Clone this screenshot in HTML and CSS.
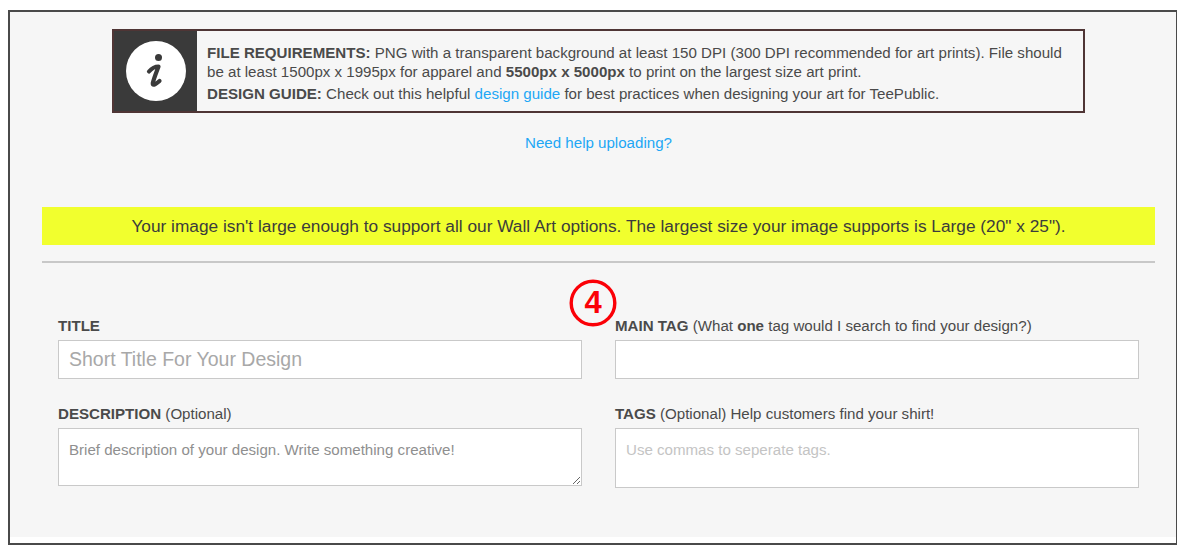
FILE: index.html
```html
<!DOCTYPE html>
<html lang="en">
<head>
    <meta charset="UTF-8">
    <title>Upload design</title>
    <link rel="stylesheet" href="styles.css">
</head>
<body>
    <div class="frame">
        <div class="panel">
            <section class="info">
                <div class="info__icon">
                    <svg width="60" height="60" viewBox="0 0 60 60" aria-hidden="true">
                        <circle cx="30" cy="30" r="30" fill="#ffffff"/>
                        <circle cx="32.500" cy="16.500" r="3.500" fill="#3a3a3a"/>
                        <path d="M23 30.500 C26 27 29 25.500 32.500 25.500 C30.500 31 28 37 26.800 42 C26.300 44.500 28.500 44.500 33.500 40" fill="none" stroke="#3a3a3a" stroke-width="4.200" stroke-linecap="round" stroke-linejoin="round"/>
                    </svg>
                </div>
                <div class="info__text">
                    <p class="info__line"><b>FILE REQUIREMENTS:</b> PNG with a transparent background at least 150 DPI (300 DPI recommended for art prints). File should be at least 1500px x 1995px for apparel and <b>5500px x 5000px</b> to print on the largest size art print.</p>
                    <p class="info__line info__line_guide"><b>DESIGN GUIDE:</b> Check out this helpful <a href="#">design guide</a> for best practices when designing your art for TeePublic.</p>
                </div>
            </section>

            <p class="help"><a href="#">Need help uploading?</a></p>

            <p class="warning">Your image isn't large enough to support all our Wall Art options. The largest size your image supports is Large (20" x 25").</p>
            <hr class="divider">

            <form class="fields">
                <span class="marker">
                    <svg width="48" height="48" viewBox="0 0 48 48" aria-hidden="true">
                        <circle cx="24" cy="24" r="21.800" fill="none" stroke="#fb0007" stroke-width="3.400"/>
                    </svg>
                    <span class="marker__num">4</span>
                </span>
                <div class="field">
                    <label class="field__label"><b>TITLE</b></label>
                    <input class="field__input field__input_large" type="text" placeholder="Short Title For Your Design">
                </div>
                <div class="field">
                    <label class="field__label"><b>MAIN TAG</b> (What <b>one</b> tag would I search to find your design?)</label>
                    <input class="field__input" type="text">
                </div>
                <div class="field">
                    <label class="field__label"><b>DESCRIPTION</b> (Optional)</label>
                    <textarea class="field__area" placeholder="Brief description of your design. Write something creative!"></textarea>
                </div>
                <div class="field">
                    <label class="field__label"><b>TAGS</b> (Optional) Help customers find your shirt!</label>
                    <textarea class="field__area field__area_fixed" placeholder="Use commas to seperate tags."></textarea>
                </div>
            </form>
        </div>
    </div>
</body>
</html>
```

FILE: styles.css
```css
body {
    margin: 0;
    background-color: #ffffff;
    font-family: "Liberation Sans", Arial, sans-serif;
    color: #4a4a4a;
}

a {
    color: #21a7f5;
    text-decoration: none;
}

.frame {
    margin: 10px 5px 0 8px;
    height: 531px;
    border: 2px solid #4a4a4a;
    border-width: 2px 1px 2px 2px;
    background-color: #ffffff;
}

.panel {
    height: 525px;
    padding: 17px 21px 0 32px;
    box-sizing: border-box;
    background-color: #f6f6f6;
}

.info {
    display: flex;
    width: 973px;
    height: 84px;
    margin-left: 70px;
    box-sizing: border-box;
    border: 2px solid #4f3535;
}

.info__icon {
    display: flex;
    align-items: center;
    justify-content: center;
    width: 83px;
    background-color: #3a3a3a;
}

.info__text {
    flex: 1;
    padding: 12px 10px 0 10px;
    font-size: 15.100px;
    line-height: 19px;
}

.info__line {
    margin: 0;
}

.info__line_guide {
    margin-top: 3px;
}

.help {
    margin: 21px 0 0 0;
    text-align: center;
    font-size: 15.100px;
    line-height: 18px;
}

.warning {
    margin: 55px 0 0 0;
    height: 38px;
    background-color: #f1ff2e;
    color: #3c3c3c;
    text-align: center;
    font-size: 17.300px;
    line-height: 38px;
}

.divider {
    margin: 16px 0 0 0;
    border: 0;
    border-top: 2px solid #c8c8c8;
}

.fields {
    position: relative;
    display: grid;
    grid-template-columns: 524px 524px;
    column-gap: 33px;
    row-gap: 26px;
    padding: 54px 16px 0 16px;
}

.marker {
    position: absolute;
    left: 527px;
    top: 16px;
    width: 48px;
    height: 48px;
}

.marker__num {
    position: absolute;
    left: 0;
    top: 0;
    width: 48px;
    text-align: center;
    color: #fb0007;
    font-size: 31px;
    font-weight: bold;
    line-height: 48px;
}

.field__label {
    display: block;
    height: 17px;
    margin-bottom: 6px;
    font-size: 15.100px;
    line-height: 17px;
}

.field__input {
    display: block;
    width: 100%;
    height: 39px;
    box-sizing: border-box;
    margin: 0;
    padding: 0 10px;
    border: 1px solid #c9c9c9;
    border-radius: 0;
    background-color: #ffffff;
    font-family: inherit;
    font-size: 15px;
    outline: none;
}

.field__input_large {
    font-size: 19.500px;
}

.field__input::placeholder {
    color: #a8a8a8;
}

.field__area {
    display: block;
    width: 100%;
    height: 58px;
    box-sizing: border-box;
    margin: 0;
    padding: 12px 10px 10px 10px;
    border: 1px solid #c9c9c9;
    border-radius: 0;
    background-color: #ffffff;
    font-family: inherit;
    font-size: 15.100px;
    line-height: 17px;
    outline: none;
}

.field__area::placeholder {
    color: #8f8f8f;
}

.field__area_fixed {
    height: 60px;
    resize: none;
}

.field__area_fixed::placeholder {
    color: #c4c4c4;
}
```
